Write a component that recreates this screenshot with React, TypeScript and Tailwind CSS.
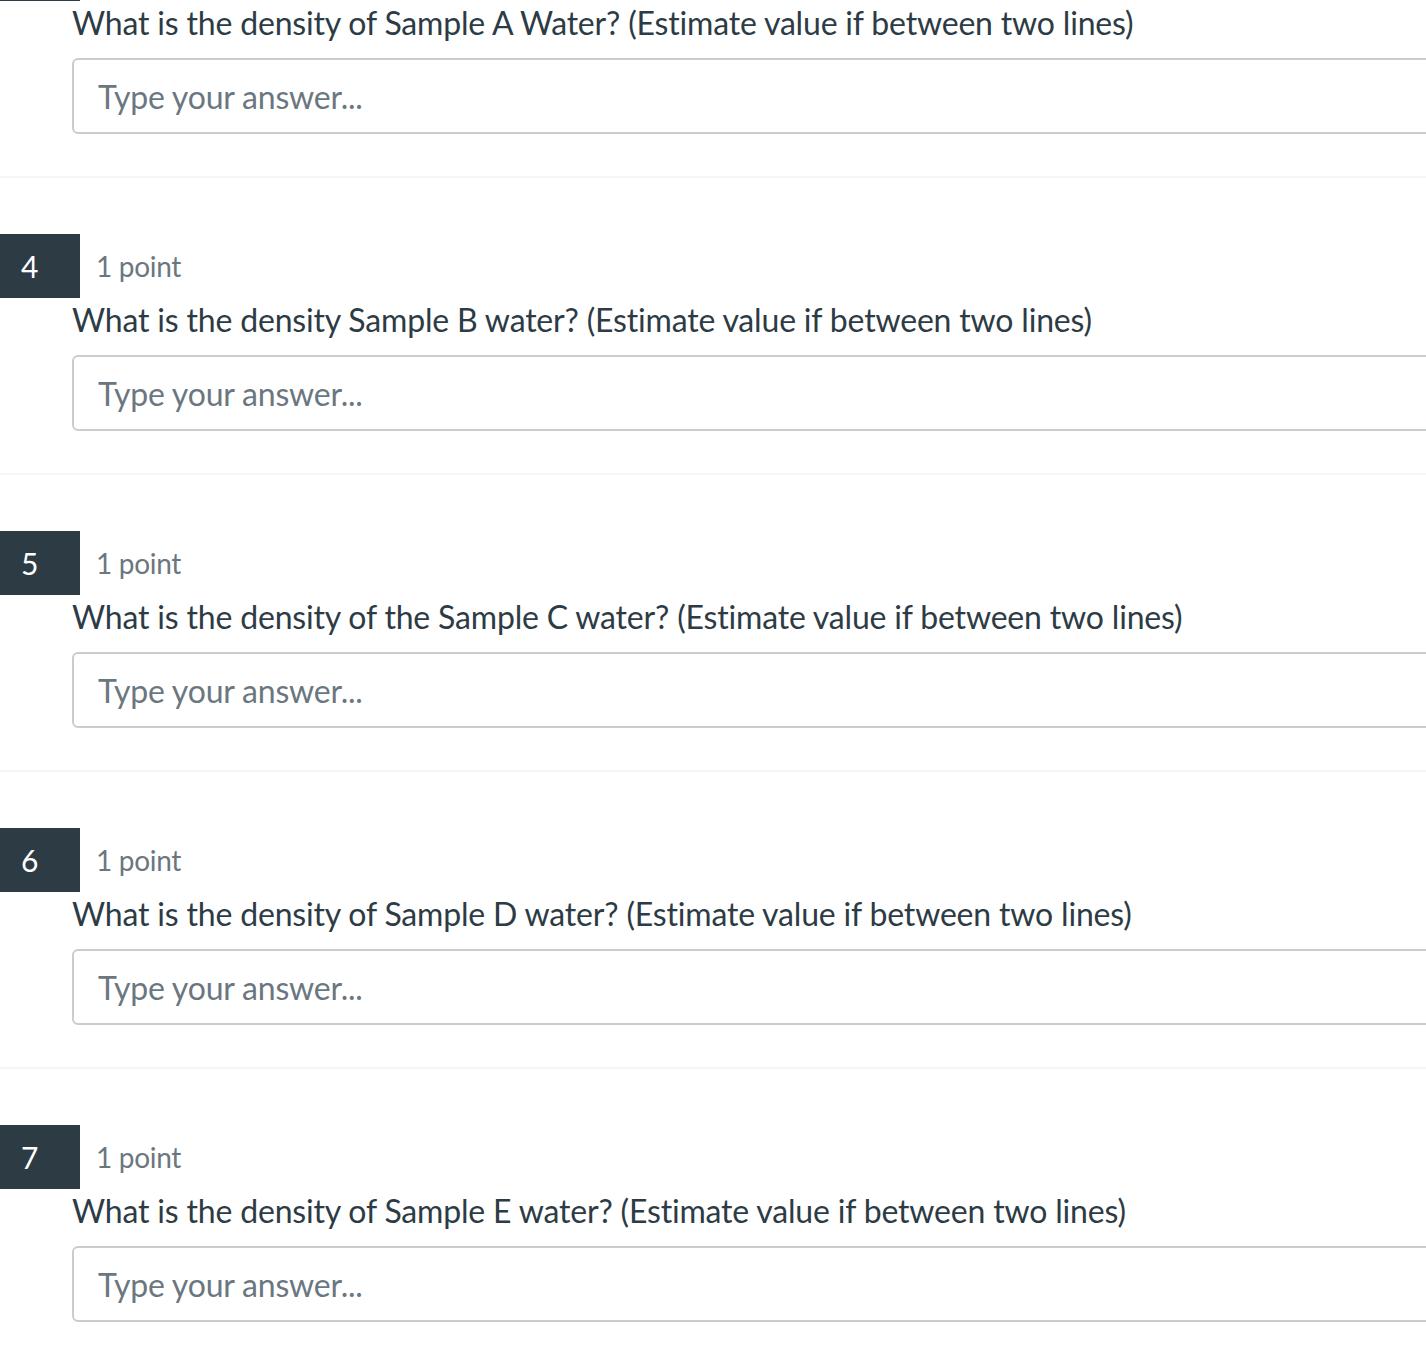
import React from "react";

const questions = [
  { n: 3, text: "What is the density of Sample A Water? (Estimate value if between two lines)" },
  { n: 4, text: "What is the density Sample B water? (Estimate value if between two lines)" },
  { n: 5, text: "What is the density of the Sample C water? (Estimate value if between two lines)" },
  { n: 6, text: "What is the density of Sample D water? (Estimate value if between two lines)" },
  { n: 7, text: "What is the density of Sample E water? (Estimate value if between two lines)" },
];

function Question({ n, text, last, hiddenHeader }: { n: number; text: string; last: boolean; hiddenHeader: boolean }) {
  return (
    <div className="flex flex-col">
      <div className="flex h-[64px] items-center">
        <div className="flex h-[64px] w-[80px] items-center bg-[#2d3b45] pl-[21px] text-[30px] text-white">
          {hiddenHeader ? null : n}
        </div>
        {!hiddenHeader && (
          <div className="pl-[16px] text-[28px] tracking-[-0.3px] text-[#6b7780]">1 point</div>
        )}
      </div>
      <div className="pl-[72px] text-[32px] leading-[44px] tracking-[-0.18px] text-[#2d3b45] whitespace-nowrap">
        {text}
      </div>
      <div className="mt-[13px] pl-[72px]">
        <input
          type="text"
          placeholder="Type your answer..."
          className="h-[76px] w-[1400px] rounded-[6px] border-2 border-[#c7cdd1] bg-white px-[24px] text-[32px] tracking-[-0.2px] text-[#2d3b45] outline-none placeholder:text-[#6b7780]"
          style={{ fontFamily: "Lato, 'Noto Sans', sans-serif" }}
        />
      </div>
      {!last && <div className="mt-[42px] mb-[56px] h-[2px] w-full bg-[#f5f5f5]" />}
    </div>
  );
}

export default function App() {
  return (
    <div
      className="h-[1348px] w-[1426px] overflow-hidden bg-white"
      style={{ fontFamily: "Lato, 'Noto Sans', sans-serif" }}
    >
      <div className="-mt-[63px] flex flex-col">
        {questions.map((q, i) => (
          <Question
            key={q.n}
            n={q.n}
            text={q.text}
            last={i === questions.length - 1}
            hiddenHeader={i === 0}
          />
        ))}
      </div>
    </div>
  );
}
